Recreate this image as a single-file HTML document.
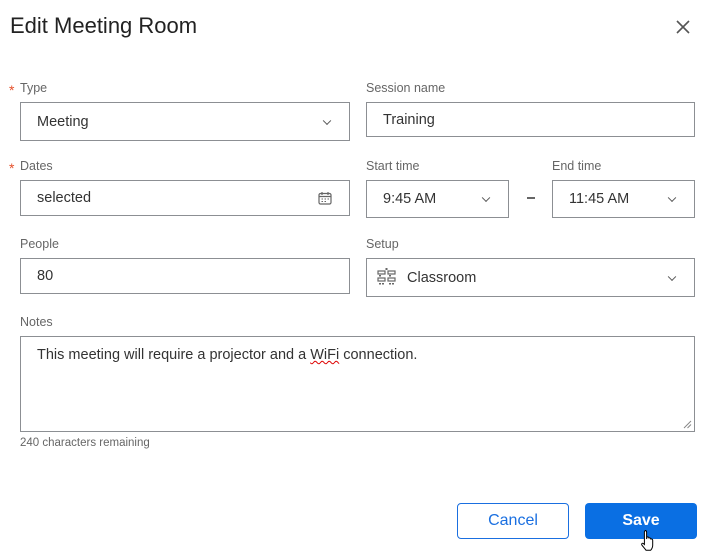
<!DOCTYPE html>
<html><head><style>
body{margin:0;width:708px;height:558px;background:#fff;font-family:"Liberation Sans",sans-serif;position:relative;overflow:hidden;color:#333}
.a{position:absolute}
.lab{position:absolute;font-size:12.5px;color:#666}
.req::before{content:"*";color:#e5502b;position:absolute;left:-11px;top:1px;font-size:14px}
.box{position:absolute;border:1px solid #8c8f93;box-sizing:border-box;font-size:14.5px;color:#333;padding-left:16px;display:flex;align-items:center}
.chev{position:absolute;right:19px;top:50%;width:5px;height:5px;border-right:1.2px solid #555;border-bottom:1.2px solid #555;transform:translateY(-70%) rotate(45deg)}
</style></head><body>
<div class="a" style="left:10px;top:13px;font-size:22px;color:#222">Edit Meeting Room</div>
<svg class="a" style="left:675px;top:19px" width="16" height="16"><path d="M2 2L14 14M14 2L2 14" stroke="#555" stroke-width="1.6"/></svg>

<div class="lab req" style="left:20px;top:81px">Type</div>
<div class="box" style="left:20px;top:102px;width:330px;height:39px">Meeting<span class="chev"></span></div>
<div class="lab" style="left:366px;top:81px">Session name</div>
<div class="box" style="left:366px;top:102px;width:329px;height:35px">Training</div>

<div class="lab req" style="left:20px;top:159px">Dates</div>
<div class="box" style="left:20px;top:180px;width:330px;height:36px">selected
<svg class="a" style="right:17px;top:10px" width="14" height="14"><rect x="1" y="2.5" width="12" height="10.5" rx="1.5" fill="none" stroke="#666" stroke-width="1.2"/><path d="M1 5.5H13M4 1V4M10 1V4" stroke="#666" stroke-width="1.2"/><path d="M3.5 8h1.5M6.5 8h1.5M9.5 8h1.5M3.5 10.5h1.5M6.5 10.5h1.5" stroke="#666" stroke-width="1"/></svg></div>
<div class="lab" style="left:366px;top:159px">Start time</div>
<div class="box" style="left:366px;top:180px;width:143px;height:38px">9:45 AM<span class="chev"></span></div>
<div class="a" style="left:527px;top:197px;width:8px;height:1.5px;background:#666"></div>
<div class="lab" style="left:552px;top:159px">End time</div>
<div class="box" style="left:552px;top:180px;width:143px;height:38px">11:45 AM<span class="chev"></span></div>

<div class="lab" style="left:20px;top:237px">People</div>
<div class="box" style="left:20px;top:258px;width:330px;height:36px">80</div>
<div class="lab" style="left:366px;top:237px">Setup</div>
<div class="box" style="left:366px;top:258px;width:329px;height:39px;padding-left:40px">Classroom<span class="chev"></span>
<svg class="a" style="left:10px;top:9px" width="20" height="20"><g fill="none" stroke="#666" stroke-width="1.2"><rect x="1" y="3" width="7" height="3"/><rect x="11" y="3" width="7" height="3"/><rect x="1" y="10" width="7" height="3"/><rect x="11" y="10" width="7" height="3"/></g><g fill="#666"><rect x="8.5" y="0" width="2" height="2"/><rect x="2" y="7" width="2" height="1.5"/><rect x="12" y="7" width="2" height="1.5"/><rect x="2" y="15" width="2" height="1.5"/><rect x="5" y="15" width="2" height="1.5"/><rect x="12" y="15" width="2" height="1.5"/><rect x="15" y="15" width="2" height="1.5"/></g></svg></div>

<div class="lab" style="left:20px;top:315px">Notes</div>
<div class="box" style="left:20px;top:336px;width:675px;height:96px;display:block;padding-top:10px;line-height:17px"><span>This meeting will require a projector and a <span style="text-decoration:underline wavy #d00;text-decoration-thickness:1px">WiFi</span> connection.</span>
<svg class="a" style="right:2px;bottom:2px" width="9" height="9"><path d="M8 1L1 8M8 4.5L4.5 8" stroke="#888" stroke-width="1"/></svg></div>
<div class="a" style="left:20px;top:437px;font-size:11.5px;color:#666">240 characters remaining</div>

<div class="a" style="left:457px;top:503px;width:112px;height:36px;box-sizing:border-box;border:1px solid #1a6fe0;border-radius:4px;color:#1a6fe0;font-size:16px;display:flex;align-items:center;justify-content:center">Cancel</div>
<div class="a" style="left:585px;top:503px;width:112px;height:36px;box-sizing:border-box;background:#0a6fe3;border-radius:4px;color:#fff;font-size:16px;font-weight:bold;display:flex;align-items:center;justify-content:center">Save</div>
<svg class="a" style="left:640px;top:529px" width="20" height="24"><path d="M5 1.5c1 0 1.6.6 1.6 1.6V10l.4-2c1-.3 1.8.2 1.9 1 .9-.3 1.8.2 1.9 1 1-.3 1.9.3 1.9 1.2v5c0 2.2-1 3.8-2 5H6c-1-1.5-3-3.6-4.2-5.3-.6-1 .4-2.1 1.5-1.4l1.1 1V3.1c0-1 .6-1.6 1.6-1.6z" fill="#fff" stroke="#000" stroke-width="1"/></svg>
</body></html>
